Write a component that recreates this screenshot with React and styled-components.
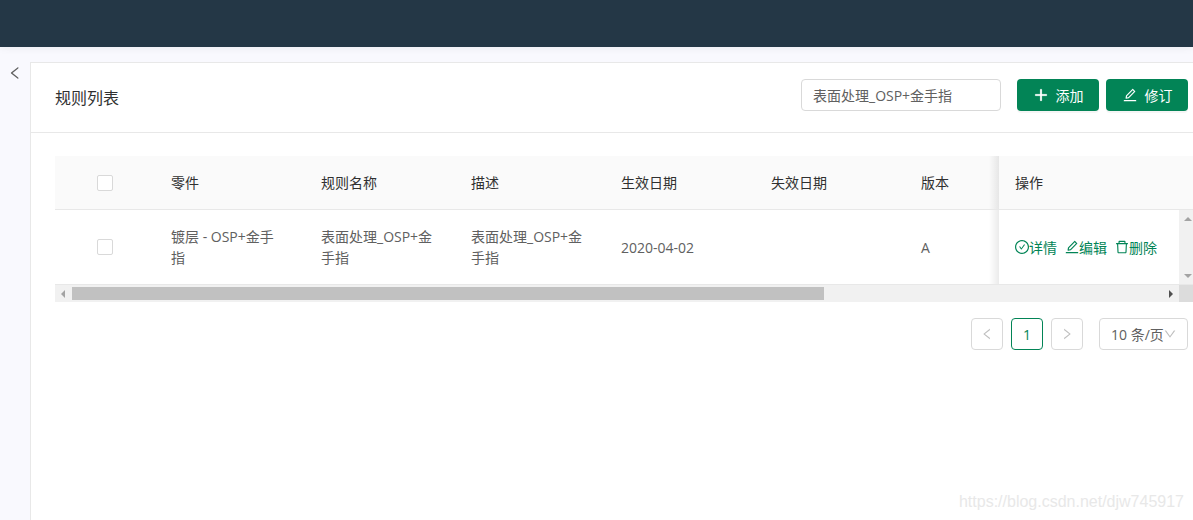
import { useState } from "react";
import styled, { createGlobalStyle } from "styled-components";
import {
  AiOutlineCheckCircle,
  AiOutlineDelete,
  AiOutlineDown,
  AiOutlineEdit,
  AiOutlineLeft,
  AiOutlinePlus,
  AiOutlineRight,
} from "react-icons/ai";

const GREEN = "#028456";
const BORDER = "#e8e8e8";
const CONTROL_BORDER = "#d9d9d9";

const GlobalStyle = createGlobalStyle`
  *, *::before, *::after {
    box-sizing: border-box;
  }

  body {
    margin: 0;
    background: #f9f9fe;
    color: #606060;
    font-family: "Open Sans", "Noto Sans CJK SC", sans-serif;
    font-size: 14px;
    line-height: 21px;
  }

  button, input, select {
    margin: 0;
    color: inherit;
    font: inherit;
  }

  svg {
    display: block;
    flex: none;
  }
`;

const Page = styled.div`
  display: flex;
  flex-direction: column;
  min-height: 100vh;
  overflow: hidden;
`;

const TopBar = styled.header`
  height: 47px;
  background: #243746;
  box-shadow: 0 1px 8px rgba(0, 21, 41, 0.06);
`;

const Main = styled.main`
  display: flex;
  flex: 1;
  padding-top: 15px;
`;

const CollapseButton = styled.button`
  display: flex;
  align-self: flex-start;
  justify-content: center;
  width: 30px;
  padding: 3px 0 0;
  border: 0;
  background: none;
  font-size: 16px;
`;

const Card = styled.section`
  flex: 1;
  min-width: 0;
  border: 1px solid ${BORDER};
  border-width: 1px 0 0 1px;
  background: white;
`;

const CardHeader = styled.div`
  display: flex;
  align-items: center;
  justify-content: space-between;
  height: 70px;
  padding: 0 5px 0 24px;
  border-bottom: 1px solid ${BORDER};
`;

const Title = styled.h1`
  margin: 0;
  padding-top: 2px;
  color: #303030;
  font-size: 16px;
  font-weight: 400;
`;

const Toolbar = styled.div`
  display: flex;
  gap: 7px;
  margin-bottom: 5px;
`;

const SearchInput = styled.input`
  width: 200px;
  height: 32px;
  margin-right: 9px;
  padding: 0 11px;
  border: 1px solid ${CONTROL_BORDER};
  border-radius: 4px;
  background: white;
`;

const PrimaryButton = styled.button`
  display: flex;
  align-items: center;
  justify-content: center;
  gap: 7px;
  width: 82px;
  height: 32px;
  padding: 0;
  border: 0;
  border-radius: 4px;
  background: ${GREEN};
  box-shadow: 0 2px 0 rgba(0, 0, 0, 0.04);
  color: white;
`;

const PlusIcon = styled(AiOutlinePlus)`
  stroke: currentColor;
  stroke-width: 50;
`;

const CardBody = styled.div`
  padding: 23px 0 24px 24px;
`;

const TableWrap = styled.div`
  position: relative;
`;

const Table = styled.table`
  width: 100%;
  border-collapse: separate;
  border-spacing: 0;
  table-layout: fixed;
`;

const Col = styled.col`
  width: ${({ $width }) => $width};
`;

const Th = styled.th`
  padding: 16px;
  border-bottom: 1px solid ${BORDER};
  background: #fafafa;
  color: #303030;
  font-weight: 400;
  text-align: ${({ $center }) => ($center ? "center" : "left")};
`;

const Td = styled.td`
  padding: ${({ $center }) => ($center ? "16px" : "16px 20px 16px 16px")};
  border-bottom: 1px solid ${BORDER};
  text-align: ${({ $center }) => ($center ? "center" : "left")};
  word-break: break-all;
`;

const FixedShadow = styled.span`
  position: absolute;
  top: 0;
  right: 100%;
  bottom: 0;
  width: 10px;
  background: linear-gradient(to left, rgba(0, 0, 0, 0.08), rgba(0, 0, 0, 0));
`;

const FixedTh = styled(Th)`
  position: relative;
`;

const FixedTd = styled(Td)`
  position: relative;
`;

const Checkbox = styled.input.attrs({ type: "checkbox" })`
  display: block;
  width: 16px;
  height: 16px;
  margin: 0 auto;
  appearance: none;
  border: 1px solid ${CONTROL_BORDER};
  border-radius: 2px;
  background: white;

  &:checked {
    border-color: ${GREEN};
    background: ${GREEN};
  }
`;

const Actions = styled.div`
  display: flex;
  gap: 8px;
`;

const ActionLink = styled.a`
  display: flex;
  align-items: center;
  color: ${GREEN};
  text-decoration: none;
  white-space: nowrap;

  svg {
    margin: 0 -1px;
  }
`;

const VerticalScroll = styled.div`
  position: absolute;
  top: 54px;
  right: 0;
  bottom: 0;
  display: flex;
  flex-direction: column;
  align-items: center;
  justify-content: space-between;
  width: 14px;
  padding: 5px 0 4px 3px;
  border-bottom: 1px solid ${BORDER};
  background: #f1f1f1;
`;

const HorizontalScroll = styled.div`
  display: grid;
  grid-template-columns: 17px 1fr 17px 14px;
  height: 17px;
  background: #f1f1f1;
`;

const ScrollEnd = styled.div`
  display: flex;
  align-items: center;
  justify-content: center;
`;

const Track = styled.div`
  padding: 2px 0;
`;

const Thumb = styled.div`
  width: 69%;
  height: 13px;
  background: #c1c1c1;
`;

const Corner = styled.div`
  background: #dcdcdc;
`;

const Pagination = styled.nav`
  display: flex;
  justify-content: flex-end;
  gap: 8px;
  padding: 16px 5px 0 0;
`;

const PageButton = styled.button`
  display: flex;
  align-items: center;
  justify-content: center;
  width: 32px;
  height: 32px;
  padding: 0;
  border: 1px solid ${({ $active }) => ($active ? GREEN : CONTROL_BORDER)};
  border-radius: 4px;
  background: white;
  color: ${({ $active }) => ($active ? GREEN : "#bfbfbf")};
`;

const SizePicker = styled.label`
  position: relative;
  margin-left: 8px;

  svg {
    position: absolute;
    top: 9px;
    right: 11px;
    color: #bfbfbf;
    font-size: 14px;
    pointer-events: none;
  }
`;

const SizeSelect = styled.select`
  width: 89px;
  height: 32px;
  padding: 0 11px;
  appearance: none;
  border: 1px solid ${CONTROL_BORDER};
  border-radius: 4px;
  background: white;
`;

const Watermark = styled.div`
  position: absolute;
  right: 9px;
  bottom: 8px;
  color: #e8e8e8;
  font-family: "Liberation Sans", sans-serif;
  font-size: 16px;
`;

const ARROWS = {
  left: "M5 0v8L1 4z",
  right: "M2 0v8l4-4z",
  up: "M0 6h8L4 2z",
  down: "M0 2h8L4 6z",
};

const Arrow = ({ direction, color = "#a3a3a3" }) => (
  <svg width="8" height="8" viewBox="0 0 8 8" fill={color} aria-hidden="true">
    <path d={ARROWS[direction]} />
  </svg>
);

const rules = [
  {
    id: 1,
    part: "镀层 - OSP+金手指",
    name: "表面处理_OSP+金手指",
    description: "表面处理_OSP+金手指",
    startDate: "2020-04-02",
    endDate: "",
    version: "A",
  },
];

const actions = [
  { label: "详情", Icon: AiOutlineCheckCircle },
  { label: "编辑", Icon: AiOutlineEdit },
  { label: "删除", Icon: AiOutlineDelete },
];

const RuleTable = () => {
  const [selected, setSelected] = useState([]);

  const toggle = (id) =>
    setSelected(selected.includes(id) ? selected.filter((s) => s !== id) : [...selected, id]);

  const toggleAll = () =>
    setSelected(selected.length === rules.length ? [] : rules.map((rule) => rule.id));

  return (
    <>
      <TableWrap>
        <Table>
          <colgroup>
            <Col $width="100px" />
            <Col $width="150px" />
            <Col $width="150px" />
            <Col $width="150px" />
            <Col $width="150px" />
            <Col $width="150px" />
            <Col $width="auto" />
            <Col $width="194px" />
          </colgroup>
          <thead>
            <tr>
              <Th $center>
                <Checkbox
                  aria-label="全选"
                  checked={selected.length === rules.length}
                  onChange={toggleAll}
                />
              </Th>
              <Th>零件</Th>
              <Th>规则名称</Th>
              <Th>描述</Th>
              <Th>生效日期</Th>
              <Th>失效日期</Th>
              <Th>版本</Th>
              <FixedTh>
                <FixedShadow />
                操作
              </FixedTh>
            </tr>
          </thead>
          <tbody>
            {rules.map((rule) => (
              <tr key={rule.id}>
                <Td $center>
                  <Checkbox
                    aria-label={rule.name}
                    checked={selected.includes(rule.id)}
                    onChange={() => toggle(rule.id)}
                  />
                </Td>
                <Td>{rule.part}</Td>
                <Td>{rule.name}</Td>
                <Td>{rule.description}</Td>
                <Td>{rule.startDate}</Td>
                <Td>{rule.endDate}</Td>
                <Td>{rule.version}</Td>
                <FixedTd>
                  <FixedShadow />
                  <Actions>
                    {actions.map(({ label, Icon }) => (
                      <ActionLink key={label} href="#">
                        <Icon size={16} />
                        {label}
                      </ActionLink>
                    ))}
                  </Actions>
                </FixedTd>
              </tr>
            ))}
          </tbody>
        </Table>
        <VerticalScroll>
          <Arrow direction="up" />
          <Arrow direction="down" />
        </VerticalScroll>
      </TableWrap>
      <HorizontalScroll>
        <ScrollEnd>
          <Arrow direction="left" />
        </ScrollEnd>
        <Track>
          <Thumb />
        </Track>
        <ScrollEnd>
          <Arrow direction="right" color="#505050" />
        </ScrollEnd>
        <Corner />
      </HorizontalScroll>
    </>
  );
};

export default function App() {
  const [keyword, setKeyword] = useState("表面处理_OSP+金手指");

  return (
    <Page>
      <GlobalStyle />
      <TopBar />
      <Main>
        <CollapseButton aria-label="收起">
          <AiOutlineLeft />
        </CollapseButton>
        <Card>
          <CardHeader>
            <Title>规则列表</Title>
            <Toolbar>
              <SearchInput
                aria-label="规则名称"
                value={keyword}
                onChange={(e) => setKeyword(e.target.value)}
              />
              <PrimaryButton>
                <PlusIcon size={16} />
                添加
              </PrimaryButton>
              <PrimaryButton>
                <AiOutlineEdit size={16} />
                修订
              </PrimaryButton>
            </Toolbar>
          </CardHeader>
          <CardBody>
            <RuleTable />
            <Pagination>
              <PageButton aria-label="上一页">
                <AiOutlineLeft size={14} />
              </PageButton>
              <PageButton $active>1</PageButton>
              <PageButton aria-label="下一页">
                <AiOutlineRight size={14} />
              </PageButton>
              <SizePicker>
                <SizeSelect aria-label="每页条数" defaultValue="10">
                  <option value="10">10 条/页</option>
                  <option value="20">20 条/页</option>
                </SizeSelect>
                <AiOutlineDown />
              </SizePicker>
            </Pagination>
          </CardBody>
        </Card>
      </Main>
      <Watermark>https://blog.csdn.net/djw745917</Watermark>
    </Page>
  );
}
